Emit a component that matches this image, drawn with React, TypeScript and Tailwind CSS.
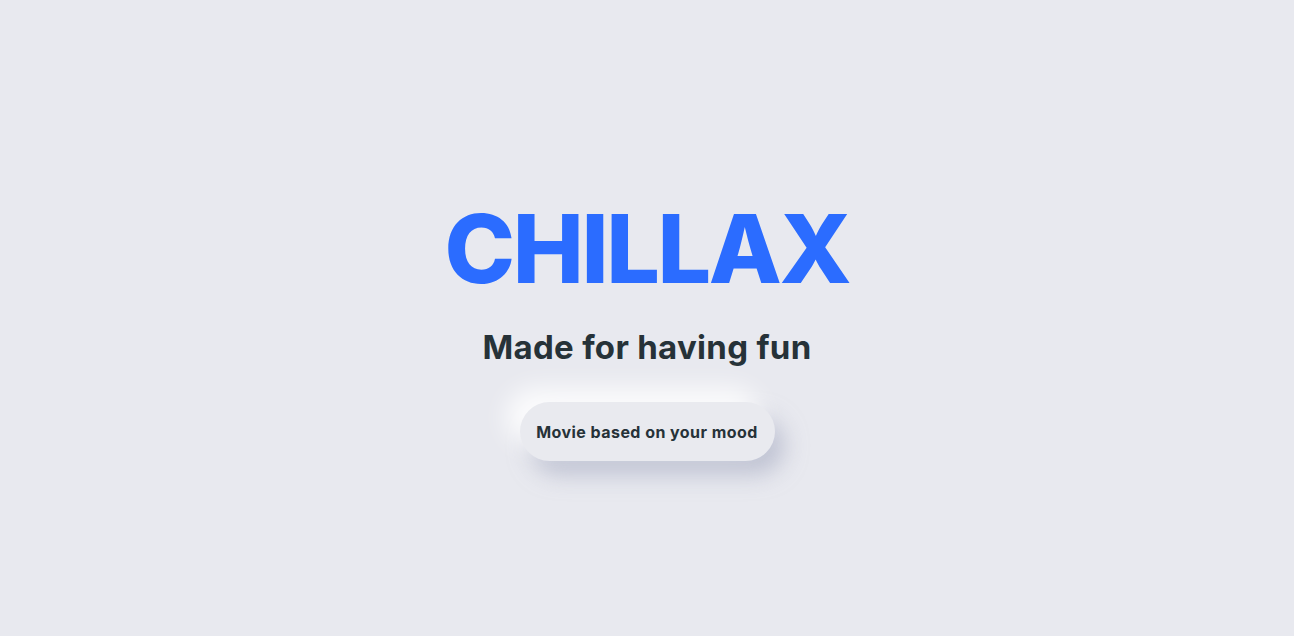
export default function App() {
  return (
    <div className="min-h-screen w-full bg-[#e8e9ef] font-['Inter','Noto_Sans',sans-serif]">
      <div className="flex flex-col items-center pt-[201px]">
        <h1 className="text-[95px] leading-none font-extrabold text-[#2b6cff] tracking-[-2.4px]">
          CHILLAX
        </h1>
        <h2 className="mt-[35px] text-[33px] leading-none font-bold text-[#263238] tracking-[0.3px]">
          Made for having fun
        </h2>
        <button className="mt-[38px] h-[59px] w-[255px] rounded-full bg-[#e9eaef] text-[16px] font-bold text-[#263238] tracking-[0.45px] shadow-[-14px_-14px_24px_rgba(255,255,255,0.85),10px_14px_22px_rgba(160,166,190,0.55)]">
          Movie based on your mood
        </button>
      </div>
    </div>
  );
}
